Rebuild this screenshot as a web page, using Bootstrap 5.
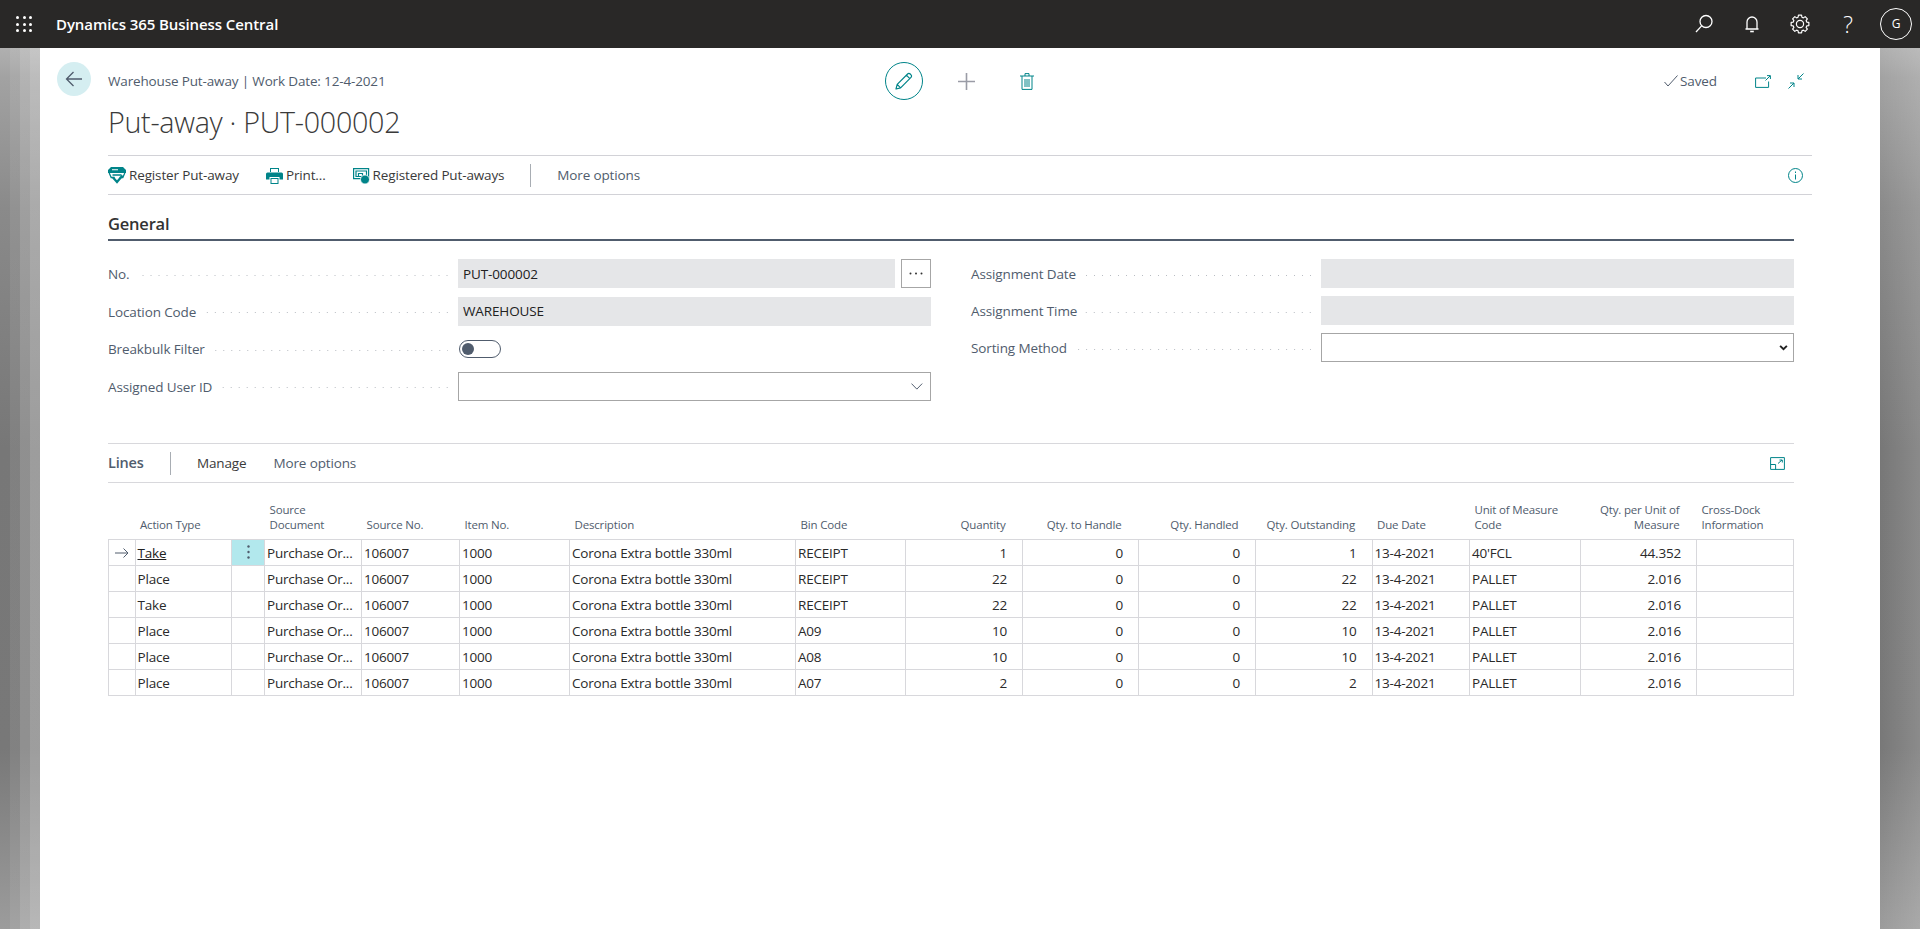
<!doctype html>
<html lang="en">
<head>
<meta charset="utf-8">
<title>Put-away PUT-000002</title>
<link href="https://cdn.jsdelivr.net/npm/bootstrap@5.3.0/dist/css/bootstrap.min.css" rel="stylesheet">
<style>
html,body{height:100%;overflow:hidden}
body{font-family:"Open Sans","Noto Sans",sans-serif;font-size:13px;color:#212121;display:flex;flex-direction:column}
.topbar{height:48px;background:#292827;color:#fff;flex:none}
.waffle{width:16px;height:16px;margin-right:24px;display:grid;grid-template-columns:repeat(3,3px);justify-content:space-between;align-content:space-between}
.waffle i{width:3px;height:3px;background:#fff;border-radius:50%}
.appname{font-size:15px;font-weight:600;letter-spacing:-.08px;color:#fff}
.navico{width:48px;height:48px;display:flex;align-items:center;justify-content:center;background:none;border:0;color:#fff;padding:0}
.navq{font-size:23px;font-weight:300;line-height:1}
.avatar{width:32px;height:32px;border:1px solid #fff;border-radius:50%;font-size:12px;display:flex;align-items:center;justify-content:center;margin-left:8px}
.backdrop{flex:1;min-height:0;padding:0 40px;background:
 linear-gradient(90deg,rgba(255,255,255,0) 10px,rgba(255,255,255,.07) 10px 20px,rgba(255,255,255,.18) 20px 30px,rgba(255,255,255,.28) 30px 40px,rgba(255,255,255,0) 40px),
 linear-gradient(90deg,rgba(255,255,255,0) 1880px,rgba(255,255,255,.14) 1920px),
 linear-gradient(180deg,#b0b0b0 0,#a2a2a2 30px,#8a8a8a 160px,#777 400px,#787878 700px,#9c9c9c 881px)}
.sheet{background:#fff;height:100%;padding:14px 68px 0 17px}
.headrow{height:38px}
.backbtn{width:34px;height:34px;border-radius:50%;background:#d5eef1;margin-right:17px;flex:none;display:flex;align-items:center;justify-content:center;border:0;padding:0}
.crumb{width:777px;font-size:13.5px;color:#505c6d;line-height:38px;letter-spacing:-.15px}
.inner{margin-left:51px}
.pagetitle{font-size:28.7px;font-weight:300;line-height:44px;margin:0 0 11px;color:#3a3a3a;letter-spacing:-.3px}
.penbtn{width:38px;height:38px;border:1px solid #008489;border-radius:50%;display:flex;align-items:center;justify-content:center;background:#fff;padding:0;margin-right:24px}
.plainbtn{width:38px;height:38px;display:flex;align-items:center;justify-content:center;background:none;border:0;padding:0}
.plainbtn+.plainbtn{margin-left:23px}
.savedtxt{font-size:13.5px;color:#505c6d;letter-spacing:-.1px;margin-left:2px}
.rightgroup{margin-right:8px}
.openico{margin-left:38px}
.shrinkico{margin-left:17px}
.cmdbar{height:40px;border-top:1px solid #d2d2d7;border-bottom:1px solid #d2d2d7;padding-top:1px}
.cmdico{margin-right:3px;flex:none}
.cmdgap{margin-left:27px}
.cmd{font-size:13.5px;color:#3a3a3a;letter-spacing:-.14px;white-space:nowrap}
.cmdlight{color:#505c6d}
.vsep{width:1px;height:23px;background:#a8adb3;margin:0 26px}
.infoico{margin-right:9px}
.formzone{padding-right:18px}
.sectitle{font-size:16.5px;font-weight:600;line-height:24px;padding:17px 0 3px;border-bottom:2px solid #505c6d;color:#333;letter-spacing:-.2px}
.fieldsrow{--bs-gutter-x:40px;margin-top:18px;height:184px}
.fieldline{height:29px;margin-bottom:8.5px}
.fieldright .fieldline{margin-bottom:8px}
.lab{width:350px;padding-right:10px;padding-top:2px;flex:none;color:#505c6d;font-size:13.5px;letter-spacing:-.12px;white-space:nowrap}
.dots{flex:1;height:1px;margin-left:8px;margin-top:1px;background-image:linear-gradient(90deg,transparent 7px,#b9bdc3 7px);background-size:8px 1px;background-position:right top}
.ro{background:#e5e6e8;height:29px;border:0;border-radius:0;padding:0 5px;font-size:13.5px;color:#212121;letter-spacing:-.12px}
.ro:disabled{background:#e5e6e8;opacity:1}
.ellip{width:30px;height:29px;margin-left:6px;border:1px solid #a6a6a6;background:#fff;color:#333;padding:0;display:flex;align-items:center;justify-content:center;border-radius:0}
.swbox{padding-left:0;min-height:0;margin:0 0 0 1px}
.swbox .form-check-input{width:42px;height:18px;margin:0;border-color:#505c6d;border-radius:9px;background-color:#fff;--bs-form-switch-bg:url("data:image/svg+xml,%3csvg xmlns='http://www.w3.org/2000/svg' viewBox='-4 -4 8 8'%3e%3ccircle r='3' fill='%23505c6d'/%3e%3c/svg%3e")}
.lookup{height:29px;border:1px solid #a6a6a6;background:#fff;padding-right:7px}
.lookup .form-control{border:0;height:27px;background:transparent;box-shadow:none}
.natsel{height:29px;border:1px solid #a6a6a6;border-radius:0;padding:0 20px 0 5px;font-size:13px;background-size:11px 9px;background-position:right 4px center;--bs-form-select-bg-img:url("data:image/svg+xml,%3csvg xmlns='http://www.w3.org/2000/svg' viewBox='0 0 16 16'%3e%3cpath fill='none' stroke='%23212121' stroke-width='3.4' d='M2 5l6 6 6-6'/%3e%3c/svg%3e")}
.linesbar{height:40px;border-top:1px solid #d8d8dc;border-bottom:1px solid #d8d8dc}
.linestitle{font-size:14.5px;font-weight:600;color:#505c6d;letter-spacing:-.2px;width:62px}
.vsep2{width:1px;height:23px;background:#a8adb3;margin-right:26px}
.moregap{margin-left:27px}
.grid{width:1685px;table-layout:fixed;border-collapse:collapse;margin:0;--bs-table-bg:transparent}
.grid th{height:56px;font-size:11.5px;font-weight:400;color:#505c6d;vertical-align:bottom;padding:0 5px 7px 5px;border:0;line-height:15px;letter-spacing:-.17px}
.grid td{height:26px;padding:1px 2px 0;border:1px solid #d8d8dc;font-size:13.5px;line-height:16px;vertical-align:middle;white-space:nowrap;overflow:hidden;color:#2a2a2a;letter-spacing:-.2px}
.grid .numc{text-align:right;padding-right:15px}
.grid th.numc{padding-right:17px}
.grid td.rowmark{padding:0;text-align:center}
.grid td.rowact{padding:0;text-align:center;line-height:0}
.grid td.actsel{background:#b2e8ed}
.c1{width:26.5px}.c2{width:96.5px}.c3{width:33px}.c4{width:97px}.c5{width:98px}.c6{width:110px}.c7{width:226px}.c8{width:110px}.c9{width:117px}.c10{width:116px}.c11{width:117px}.c12{width:116.5px}.c13{width:97.5px}.c14{width:110.5px}.c15{width:116.5px}.c16{width:97px}
.firstlink{color:#212121;text-decoration:underline}
</style>
</head>
<body>
<nav class="topbar navbar p-0 ps-3 pe-2 d-flex flex-nowrap align-items-center justify-content-start">
  <div class="waffle"><i></i><i></i><i></i><i></i><i></i><i></i><i></i><i></i><i></i></div>
  <span class="appname">Dynamics 365 Business Central</span>
  <div class="ms-auto d-flex align-items-center">
    <button class="navico" aria-label="Search"><svg width="20" height="20" viewBox="0 0 20 20" fill="none" stroke="#fff" stroke-width="1.3"><circle cx="12" cy="7.5" r="6"/><path d="M7.6 11.9 2 18"/></svg></button>
    <button class="navico" aria-label="Notifications"><svg width="18" height="20" viewBox="0 0 18 20" fill="none" stroke="#fff" stroke-width="1.3"><path d="M4 15V8a5 5 0 0 1 10 0v7zM2.5 15h13"/><path d="M7.2 17.5h3.6" stroke-width="1.6"/></svg></button>
    <button class="navico" aria-label="Settings"><svg width="20" height="20" viewBox="0 0 20 20" fill="none" stroke="#fff" stroke-width="1.2" stroke-linejoin="round"><polygon points="16.73,8.07 18.86,8.44 18.86,11.56 16.73,11.93 16.12,13.39 17.37,15.16 15.16,17.37 13.39,16.12 11.93,16.73 11.56,18.86 8.44,18.86 8.07,16.73 6.61,16.12 4.84,17.37 2.63,15.16 3.88,13.39 3.27,11.93 1.14,11.56 1.14,8.44 3.27,8.07 3.88,6.61 2.63,4.84 4.84,2.63 6.61,3.88 8.07,3.27 8.44,1.14 11.56,1.14 11.93,3.27 13.39,3.88 15.16,2.63 17.37,4.84 16.12,6.61"/><circle cx="10" cy="10" r="3.6"/></svg></button>
    <button class="navico navq" aria-label="Help">?</button>
    <div class="avatar">G</div>
  </div>
</nav>
<div class="backdrop">
 <main class="sheet">
  <div class="headrow d-flex align-items-center">
    <button class="backbtn align-self-start" aria-label="Back"><svg width="18" height="16" viewBox="0 0 18 16" fill="none" stroke="#505c6d" stroke-width="1.3"><path d="M17 8H1.5M8.5 1 1.5 8l7 7"/></svg></button>
    <div class="crumb">Warehouse Put-away | Work Date: 12-4-2021</div>
    <button class="penbtn" aria-label="Edit"><svg width="20" height="20" viewBox="0 0 20 20" fill="none" stroke="#008489" stroke-width="1.2" stroke-linejoin="round"><path d="M2 18l1.2-4.6L13.6 3a1.8 1.8 0 0 1 2.6 0l.8.8a1.8 1.8 0 0 1 0 2.6L6.6 16.8zM3.2 13.4l3.4 3.4M12.4 4.2l3.4 3.4"/></svg></button>
    <button class="plainbtn" aria-label="New"><svg width="17" height="17" viewBox="0 0 17 17" stroke="#9a9ca6" stroke-width="1.6"><path d="M8.5 0v17M0 8.5h17"/></svg></button>
    <button class="plainbtn" aria-label="Delete"><svg width="14" height="17" viewBox="0 0 14 17" fill="none" stroke="#008489" stroke-width="1"><path d="M0 3h14M2 3v13.4h10V3M5 3V.6h4V3M5 6v8M7 6v8M9 6v8"/></svg></button>
    <div class="ms-auto d-flex align-items-center rightgroup">
      <svg width="14" height="12" viewBox="0 0 14 12" fill="none" stroke="#505c6d" stroke-width="1"><path d="M.5 7l3.5 4L13.5.5"/></svg>
      <span class="savedtxt">Saved</span>
      <svg class="openico" width="16" height="13" viewBox="0 0 16 13" fill="none" stroke="#008489" stroke-width="1"><path d="M11 3H.6v9.4h13V6.5M10.5 5.5 15 1M12 .6h3.4V4"/></svg>
      <svg class="shrinkico" width="16" height="16" viewBox="0 0 16 16" fill="none" stroke="#008489" stroke-width="1"><path d="M15.5.5 10 6M10 2v4h4M.5 15.5 6 10M2 10h4v4"/></svg>
    </div>
  </div>
  <div class="inner">
    <h1 class="pagetitle">Put-away · PUT-000002</h1>
    <div class="cmdbar d-flex align-items-center">
      <svg class="cmdico" width="18" height="17" viewBox="0 0 18 17"><path fill="#008489" d="M3 0h12l3 3v3H0V3zM4 2.2v1h6v-1z"/><path fill="none" stroke="#008489" stroke-width="1.3" d="M1.2 6l2 4.5h3.5M16.8 6l-2 4.5h-3.2M4.5 8h9"/><path fill="none" stroke="#008489" stroke-width="2.2" d="M5 10.5l4 4.5 5.5-6.5"/></svg>
      <span class="cmd">Register Put-away</span>
      <svg class="cmdico cmdgap" width="17" height="16" viewBox="0 0 17 16"><path fill="#008489" d="M4 0h9v4H12V1H5v3H4zM1.5 4.5h14A1.5 1.5 0 0 1 17 6v5.5h-3.5V9h-10v2.5H0V6a1.5 1.5 0 0 1 1.5-1.5zM4.5 10h8v6h-8zm1 1v4h6v-4z"/></svg>
      <span class="cmd">Print...</span>
      <svg class="cmdico cmdgap" width="17" height="16" viewBox="0 0 17 16" fill="none" stroke="#008489" stroke-width="1.2"><path d="M.6.6h15v10H.6zM3 3h10.5v5.5H3zM5.5 5.5h4v3h-4z"/><circle cx="12" cy="11.5" r="4.5" fill="#008489" stroke="#fff" stroke-width=".8"/></svg>
      <span class="cmd">Registered Put-aways</span>
      <span class="vsep"></span>
      <span class="cmd cmdlight">More options</span>
      <svg class="ms-auto infoico" width="15" height="15" viewBox="0 0 15 15" fill="none" stroke="#008489" stroke-width="1"><circle cx="7.5" cy="7.5" r="7"/><path d="M7.5 6.5v5M7.5 3.5v1.5"/></svg>
    </div>
    <div class="formzone">
      <div class="sectitle">General</div>
      <div class="row fieldsrow">
        <div class="col-6">
          <div class="fieldline d-flex align-items-center">
            <div class="lab d-flex align-items-center"><span>No.</span><span class="dots"></span></div>
            <input class="form-control ro flex-grow-1" disabled value="PUT-000002" aria-label="No.">
            <button class="ellip flex-shrink-0" aria-label="More"><svg width="14" height="3" viewBox="0 0 14 3" fill="#333"><circle cx="1.5" cy="1.5" r="1"/><circle cx="7" cy="1.5" r="1"/><circle cx="12.5" cy="1.5" r="1"/></svg></button>
          </div>
          <div class="fieldline d-flex align-items-center">
            <div class="lab d-flex align-items-center"><span>Location Code</span><span class="dots"></span></div>
            <input class="form-control ro flex-grow-1" disabled value="WAREHOUSE" aria-label="Location Code">
          </div>
          <div class="fieldline d-flex align-items-center">
            <div class="lab d-flex align-items-center"><span>Breakbulk Filter</span><span class="dots"></span></div>
            <div class="form-check form-switch swbox"><input class="form-check-input" type="checkbox" role="switch" aria-label="Breakbulk Filter"></div>
          </div>
          <div class="fieldline d-flex align-items-center">
            <div class="lab d-flex align-items-center"><span>Assigned User ID</span><span class="dots"></span></div>
            <div class="lookup d-flex align-items-center flex-grow-1">
              <input class="form-control" aria-label="Assigned User ID">
              <svg width="12" height="7" viewBox="0 0 12 7" fill="none" stroke="#505c6d" stroke-width="1"><path d="M.5.5 6 6.2 11.5.5"/></svg>
            </div>
          </div>
        </div>
        <div class="col-6 fieldright">
          <div class="fieldline d-flex align-items-center">
            <div class="lab d-flex align-items-center"><span>Assignment Date</span><span class="dots"></span></div>
            <input class="form-control ro flex-grow-1" disabled aria-label="Assignment Date">
          </div>
          <div class="fieldline d-flex align-items-center">
            <div class="lab d-flex align-items-center"><span>Assignment Time</span><span class="dots"></span></div>
            <input class="form-control ro flex-grow-1" disabled aria-label="Assignment Time">
          </div>
          <div class="fieldline d-flex align-items-center">
            <div class="lab d-flex align-items-center"><span>Sorting Method</span><span class="dots"></span></div>
            <select class="form-select natsel flex-grow-1" aria-label="Sorting Method"><option></option></select>
          </div>
        </div>
      </div>
      <div class="linesbar d-flex align-items-center">
        <span class="linestitle">Lines</span>
        <span class="vsep2"></span>
        <span class="cmd">Manage</span>
        <span class="cmd cmdlight moregap">More options</span>
        <svg class="ms-auto infoico" width="15" height="13" viewBox="0 0 15 13" fill="none" stroke="#008489" stroke-width="1"><path d="M.6.6h13.8v11.8H.6zM.6 7.5h5v5M8 6.5l4-3.5M9.5 3h2.8v2.5"/></svg>
      </div>
      <table class="table grid">
        <colgroup><col class="c1"><col class="c2"><col class="c3"><col class="c4"><col class="c5"><col class="c6"><col class="c7"><col class="c8"><col class="c9"><col class="c10"><col class="c11"><col class="c12"><col class="c13"><col class="c14"><col class="c15"><col class="c16"></colgroup>
        <thead><tr>
          <th></th><th>Action Type</th><th></th><th>Source Document</th><th>Source No.</th><th>Item No.</th><th>Description</th><th>Bin Code</th>
          <th class="numc">Quantity</th><th class="numc">Qty. to Handle</th><th class="numc">Qty. Handled</th><th class="numc">Qty. Outstanding</th><th>Due Date</th><th>Unit of Measure Code</th><th class="numc">Qty. per Unit of Measure</th><th>Cross-Dock Information</th>
        </tr></thead>
        <tbody>
          <tr><td class="rowmark"><svg width="14" height="10" viewBox="0 0 14 10" fill="none" stroke="#505c6d" stroke-width="1"><path d="M0 5h13M8.5.5 13 5 8.5 9.5"/></svg></td><td><span class="firstlink">Take</span></td><td class="rowact actsel"><svg width="3" height="14" viewBox="0 0 3 14" fill="#505c6d"><circle cx="1.5" cy="1.5" r="1.2"/><circle cx="1.5" cy="7" r="1.2"/><circle cx="1.5" cy="12.5" r="1.2"/></svg></td><td>Purchase Or...</td><td>106007</td><td>1000</td><td>Corona Extra bottle 330ml</td><td>RECEIPT</td><td class="numc">1</td><td class="numc">0</td><td class="numc">0</td><td class="numc">1</td><td>13-4-2021</td><td>40'FCL</td><td class="numc">44.352</td><td></td></tr>
          <tr><td></td><td>Place</td><td></td><td>Purchase Or...</td><td>106007</td><td>1000</td><td>Corona Extra bottle 330ml</td><td>RECEIPT</td><td class="numc">22</td><td class="numc">0</td><td class="numc">0</td><td class="numc">22</td><td>13-4-2021</td><td>PALLET</td><td class="numc">2.016</td><td></td></tr>
          <tr><td></td><td>Take</td><td></td><td>Purchase Or...</td><td>106007</td><td>1000</td><td>Corona Extra bottle 330ml</td><td>RECEIPT</td><td class="numc">22</td><td class="numc">0</td><td class="numc">0</td><td class="numc">22</td><td>13-4-2021</td><td>PALLET</td><td class="numc">2.016</td><td></td></tr>
          <tr><td></td><td>Place</td><td></td><td>Purchase Or...</td><td>106007</td><td>1000</td><td>Corona Extra bottle 330ml</td><td>A09</td><td class="numc">10</td><td class="numc">0</td><td class="numc">0</td><td class="numc">10</td><td>13-4-2021</td><td>PALLET</td><td class="numc">2.016</td><td></td></tr>
          <tr><td></td><td>Place</td><td></td><td>Purchase Or...</td><td>106007</td><td>1000</td><td>Corona Extra bottle 330ml</td><td>A08</td><td class="numc">10</td><td class="numc">0</td><td class="numc">0</td><td class="numc">10</td><td>13-4-2021</td><td>PALLET</td><td class="numc">2.016</td><td></td></tr>
          <tr><td></td><td>Place</td><td></td><td>Purchase Or...</td><td>106007</td><td>1000</td><td>Corona Extra bottle 330ml</td><td>A07</td><td class="numc">2</td><td class="numc">0</td><td class="numc">0</td><td class="numc">2</td><td>13-4-2021</td><td>PALLET</td><td class="numc">2.016</td><td></td></tr>
        </tbody>
      </table>
    </div>
  </div>
 </main>
</div>
<script src="https://cdn.jsdelivr.net/npm/bootstrap@5.3.0/dist/js/bootstrap.bundle.min.js"></script>
</body>
</html>
